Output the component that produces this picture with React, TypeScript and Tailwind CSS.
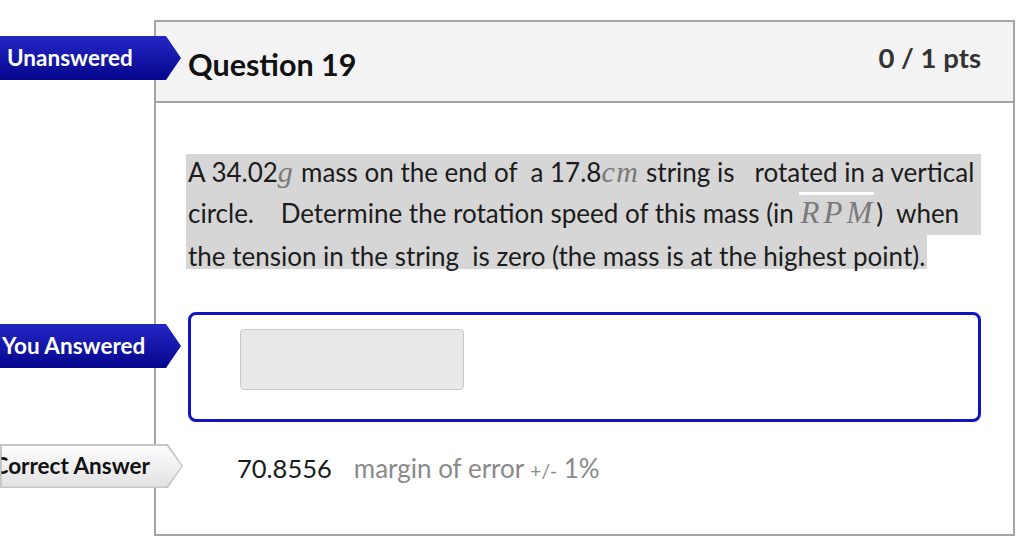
import React from 'react'

const arrow = '[clip-path:polygon(0_0,calc(100%_-_15px)_0,100%_50%,calc(100%_-_15px)_100%,0_100%)]'

function Banner({ label, top, left, light }: { label: string; top: number; left: number; light?: boolean }) {
  if (light) {
    return (
      <div className="absolute left-0 h-[44px] w-[183px]" style={{ top }}>
        <div className="absolute inset-0 bg-[#c6c6c6] [clip-path:polygon(0_0,calc(100%_-_15px)_0,100%_50%,calc(100%_-_15px)_100%,0_100%)]" />
        <div className="absolute inset-[1.5px] bg-linear-to-b from-[#fdfdfd] to-[#e2e2e2] flex items-center [clip-path:polygon(0_0,calc(100%_-_15px)_0,100%_50%,calc(100%_-_15px)_100%,0_100%)]">
          <span className="text-[22.5px] font-bold text-[#111] whitespace-nowrap" style={{ marginLeft: left }}>
            {label}
          </span>
        </div>
      </div>
    )
  }
  return (
    <div
      className={`absolute left-0 h-[44px] w-[181px] bg-linear-to-b from-[#2626c6] to-[#04048c] flex items-center ${arrow}`}
      style={{ top }}
    >
      <span className="text-[22.5px] font-bold text-white whitespace-nowrap" style={{ marginLeft: left }}>
        {label}
      </span>
    </div>
  )
}

function M({ children, wide }: { children: React.ReactNode; wide?: boolean }) {
  return (
    <span
      className={
        wide
          ? "font-['Liberation_Serif',serif] italic text-[#7a7a7a] text-[31px] tracking-[4px]"
          : "font-['Liberation_Serif',serif] italic text-[#7a7a7a] text-[30px] tracking-[1.5px]"
      }
    >
      {children}
    </span>
  )
}

export default function App() {
  return (
    <div className="relative w-[1024px] h-[560px] overflow-hidden bg-white font-['Lato',sans-serif] text-[#1c1c1c]">
      <div className="pl-[154px] pt-[20px]">
        <div className="w-[861px] h-[516px] border-2 border-[#a4a4a4] flex flex-col">
          {/* header */}
          <div className="h-[81px] bg-[#f3f3f3] border-b-2 border-[#a4a4a4] flex items-center justify-between pl-[32px] pr-[32px]">
            <span className="text-[30.5px] font-bold text-[#111] mt-[6px]">Question 19</span>
            <span className="text-[27.5px] font-bold text-[#333] mt-[-8px]">0 / 1 pts</span>
          </div>

          {/* question text */}
          <div className="mt-[51px] pl-[30px] text-[26px] whitespace-pre">
            <div className="w-[795px] h-[41px] leading-[36px] bg-[#d6d6d6] pl-[2px]">
              A 34.02<M>g</M> mass on the end of  a 17.8<M>cm</M> string is   rotated in a vertical
            </div>
            <div className="w-[795px] h-[40px] leading-[36px] bg-[#d6d6d6] pl-[2px]">
              circle.    Determine the rotation speed of this mass (in{' '}
              <span className="relative">
                <span className="absolute left-[-2px] right-[2px] top-[-5px] h-[3px] bg-white" />
                <M wide>RPM</M>
              </span>
              )  when
            </div>
            <div className="w-[741px] h-[34px] leading-[42px] bg-[#d6d6d6] pl-[2px]">
              the tension in the string  is zero (the mass is at the highest point).
            </div>
          </div>

          {/* your answer */}
          <div className="mt-[43px] ml-[32px] w-[793px] h-[110px] border-[3px] border-[#1313c6] rounded-[8px] pt-[14px] pl-[49px]">
            <div className="w-[224px] h-[61px] bg-[#e8e8e8] border-[1.5px] border-[#c8c8c8] rounded-[4px]" />
          </div>

          {/* correct answer */}
          <div className="mt-[27px] ml-[81px] flex items-baseline text-[26px] whitespace-pre text-[#8a8a8a]">
            <span className="text-[#1a1a1a] text-[25.5px] mr-[22px]">70.8556</span>
            <span>margin of error </span>
            <span className="text-[19px]">+/-</span>
            <span> 1%</span>
          </div>
        </div>
      </div>

      <Banner label="Unanswered" top={36} left={7} />
      <Banner label="You Answered" top={324} left={2} />
      <Banner label="Correct Answer" top={444} left={-8} light />
    </div>
  )
}
